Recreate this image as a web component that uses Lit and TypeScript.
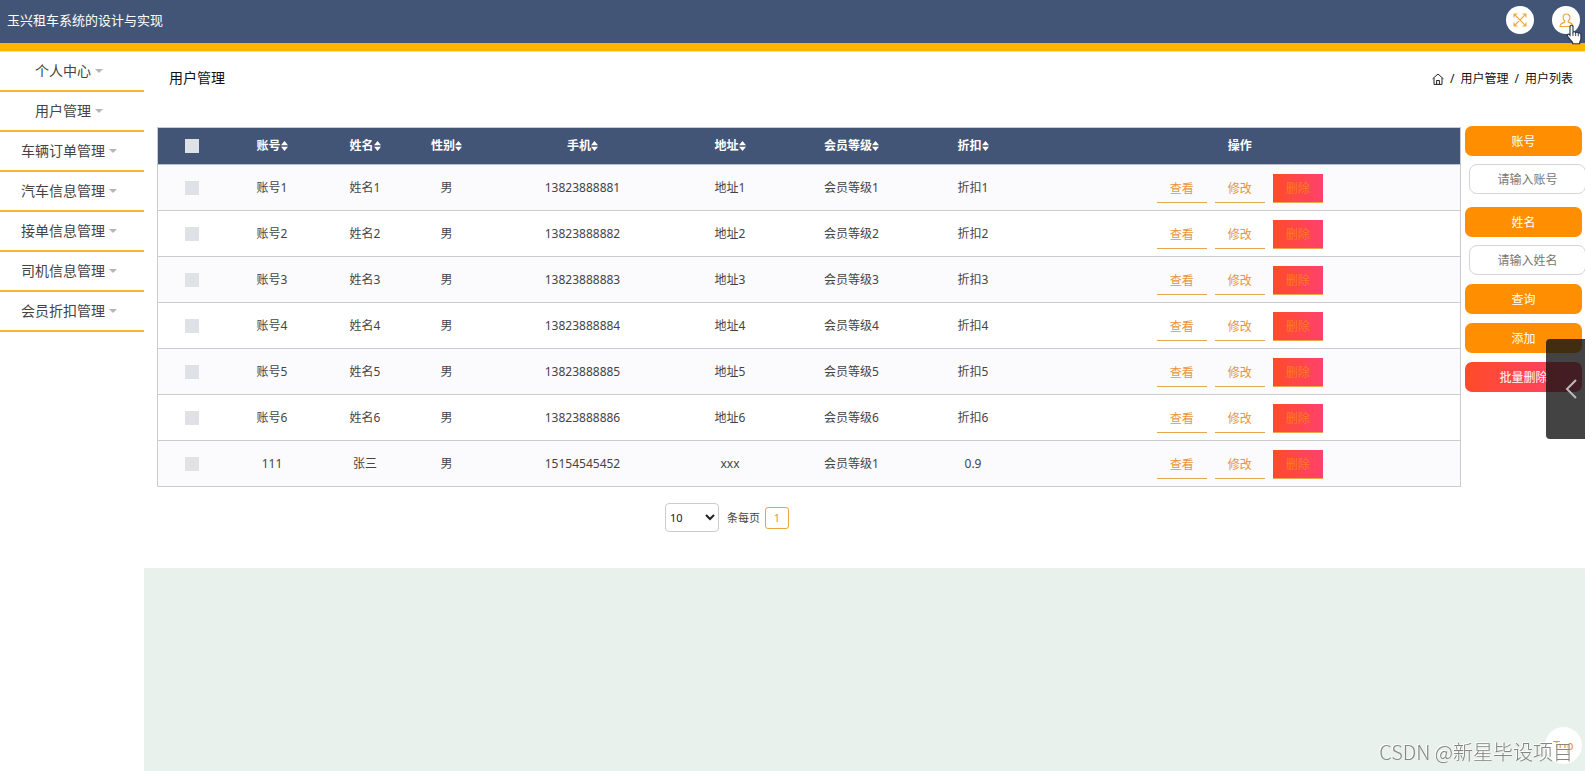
import { LitElement, html, css, svg } from "lit";
import { customElement, state } from "lit/decorators.js";

interface Member {
  account: string;
  name: string;
  sex: string;
  phone: string;
  address: string;
  level: string;
  discount: string;
}

const MENU = ["个人中心", "用户管理", "车辆订单管理", "汽车信息管理", "接单信息管理", "司机信息管理", "会员折扣管理"];

const COLUMNS = ["账号", "姓名", "性别", "手机", "地址", "会员等级", "折扣"];

const MEMBERS: Member[] = [
  ...[1, 2, 3, 4, 5, 6].map((n) => ({
    account: `账号${n}`,
    name: `姓名${n}`,
    sex: "男",
    phone: `1382388888${n}`,
    address: `地址${n}`,
    level: `会员等级${n}`,
    discount: `折扣${n}`,
  })),
  { account: "111", name: "张三", sex: "男", phone: "15154545452", address: "xxx", level: "会员等级1", discount: "0.9" },
];

const sortIcon = svg`<svg class="sort" viewBox="0 0 7 10" aria-hidden="true"><path d="M3.5 0 7 4.3H0zM3.5 10 0 5.7h7z" fill="currentColor"/></svg>`;

const expandIcon = svg`<svg viewBox="0 0 14 14" width="14" height="14" fill="none" stroke="#f0a63c" stroke-width="1.1" aria-hidden="true">
  <path d="M1 1l12 12M13 1L1 13M1 4.5V1h3.5M9.500 1H13v3.500M13 9.500V13H9.500M4.500 13H1V9.500"/></svg>`;

const userIcon = svg`<svg viewBox="0 0 15 15" width="15" height="15" fill="none" stroke="#f0a63c" stroke-width="1.2" stroke-linejoin="round" aria-hidden="true">
  <path d="M7.500 1C5.400 1 4.100 2.500 4.100 4.600c0 1.600.7 2.800 1.700 3.500v1.100C3.600 9.800 1.300 10.900 1 13.500h13c-.3-2.600-2.600-3.700-4.800-4.300V8.100c1-.7 1.700-1.900 1.700-3.500C10.900 2.500 9.600 1 7.500 1z"/></svg>`;

const homeIcon = svg`<svg viewBox="0 0 12 12" width="12" height="12" fill="none" stroke="#222" stroke-width="1" aria-hidden="true">
  <path d="M.6 5.800 6 1l5.400 4.800M2 5v6.400h8V5M4.600 11.400V7.500h2.800v3.900"/></svg>`;

const handIcon = svg`<svg class="hand" viewBox="0 0 17 21" width="17" height="21" aria-hidden="true">
  <path d="M5.400 1.200c1 0 1.600.6 1.600 1.600v5.300c.3-.5 2.300-.5 2.600.5.500-.6 2.300-.4 2.600.6.600-.5 2.500-.1 2.700 1.200v4.400c0 1.200-1 2.500-1.200 3.600v1.400H6.600v-1.300C5 16.800 3.200 14.500 1.700 12.300c-.9-1.500.6-2.700 1.800-1.600l.5.600V2.800c0-1 .5-1.600 1.400-1.600z" fill="#fff" stroke="#24304a" stroke-width="1.100"/>
  <path d="M7 8.500v3.500M9.700 9v3M12.300 9.800v2.500" stroke="#24304a" stroke-width=".9"/></svg>`;

@customElement("app-root")
export class AppRoot extends LitElement {
  @state() private selected = new Set<number>();

  static styles = css`
    :host {
      display: flex;
      flex-direction: column;
      min-height: 100vh;
      overflow: hidden;
      background: #fff;
      color: #444;
      font: 12px/18px "Noto Sans", "Noto Sans CJK SC", sans-serif;
    }
    * { box-sizing: border-box; }
    button, input, select { font: inherit; color: inherit; margin: 0; }
    button { cursor: pointer; padding: 0; }
    a { color: inherit; text-decoration: none; }

    .top {
      display: flex;
      align-items: center;
      justify-content: space-between;
      height: 51px;
      padding: 0 5px 3px 7px;
      background: #425577;
      border-bottom: 8px solid #ffb400;
      color: #fff;
    }
    .brand { margin: 0; font-size: 13px; font-weight: 400; }
    .tools { display: flex; gap: 18px; }
    .tool {
      position: relative;
      display: grid;
      place-items: center;
      width: 28px;
      height: 28px;
      border: 0;
      border-radius: 50%;
      background: #fff;
    }
    .hand { position: absolute; left: 14px; top: 18px; z-index: 2; }

    .body { display: flex; flex: 1; border-top: 1px solid #ffe08f; }
    .side { flex: none; width: 144px; }
    .menu { margin: 0; padding: 0; list-style: none; }
    .item {
      display: flex;
      align-items: center;
      justify-content: center;
      gap: 4px;
      height: 40px;
      padding-right: 6px;
      border-bottom: 2px solid #efb73a;
      font-size: 14px;
    }
    .item::after {
      content: "";
      border: 4px solid transparent;
      border-top-color: #b5b5b5;
      border-bottom: 0;
    }

    .main { flex: 1; min-width: 0; background: #e8f1eb; }
    .panel { background: #fff; padding: 12px 0 36px 13px; }
    .crumbs {
      display: flex;
      align-items: center;
      justify-content: space-between;
      height: 28px;
      padding: 0 12px;
      color: #111;
    }
    .title { margin: 0; font-size: 14px; font-weight: 400; }
    .path { display: flex; align-items: center; gap: 6px; padding-top: 2px; }
    .home { display: grid; }

    .work { display: flex; align-items: flex-start; gap: 5px; padding-top: 34px; }
    .list { flex: 1; min-width: 0; padding-top: 1px; }
    .grid {
      width: 100%;
      table-layout: fixed;
      border-collapse: collapse;
      border: 1px solid #ccc;
      text-align: center;
    }
    .w-check { width: 68px; }
    .w-sex { width: 70px; }
    .w-short { width: 93px; }
    .w-phone { width: 202px; }
    .w-level { width: 150px; }
    .w-ops { width: 441px; }
    th, td { padding: 0; }
    th { height: 37px; background: #425577; color: #fff; border-bottom: 1px solid #b8bfcc; }
    td { height: 46px; border-bottom: 1px solid #ccc; }
    tbody tr:nth-child(odd) { background: #fbfafd; }
    .sort { width: 7px; height: 10px; vertical-align: -1px; }
    .tick {
      appearance: none;
      display: block;
      width: 14px;
      height: 14px;
      margin: 0 auto;
      background: #dee1e6;
    }
    .tick:checked { background: #ff8f00; }
    .ops { display: flex; justify-content: center; gap: 8px; padding-top: 2px; }
    .op {
      width: 50px;
      height: 29px;
      padding-top: 1px;
      border: 0;
      border-bottom: 1px solid #e5a750;
      background: none;
      color: #e8953a;
    }
    .op.del { background: linear-gradient(90deg, #ff4b2b, #ff416c) border-box; color: #ff7a1c; }

    .pager {
      display: flex;
      align-items: center;
      justify-content: center;
      gap: 8px;
      padding: 16px 163px 0 0;
      font-size: 11px;
    }
    .size {
      width: 54px;
      height: 29px;
      border: 1px solid #ccc;
      border-radius: 4px;
      background: #fff;
      color: #222;
    }
    .pages { display: flex; gap: 5px; align-items: center; }
    .page {
      width: 24px;
      height: 22px;
      border: 1px solid #e8a63c;
      border-radius: 3px;
      background: #fff;
      color: #e8953a;
    }

    .filter { flex: none; width: 117px; margin-right: 3px; display: flex; flex-direction: column; gap: 9px; }
    .tag {
      display: grid;
      place-items: center;
      width: 100%;
      height: 30px;
      padding-top: 1px;
      border: 0;
      border-radius: 7px;
      background: #ff8f00;
      color: #fff;
    }
    .tag.danger { background: linear-gradient(90deg, #ff4b2b, #ff416c); }
    .field { display: flex; flex-direction: column; gap: 8px; }
    .field + .field { padding-top: 4px; }
    .box {
      width: 100%;
      height: 30px;
      margin-left: 4px;
      padding: 1px 8px 0;
      border: 1px solid #d5d5d9;
      border-radius: 8px;
      background: #fff;
      text-align: center;
    }
    .box::placeholder { color: #777; opacity: 1; }

    .drawer {
      position: fixed;
      right: 0;
      top: 339px;
      display: grid;
      place-items: center;
      width: 39px;
      height: 100px;
      padding-left: 10px;
      border: 0;
      border-radius: 4px 0 0 4px;
      background: rgba(20, 20, 20, 0.8);
    }
    .totop {
      position: fixed;
      right: 3px;
      bottom: 7px;
      display: grid;
      place-items: center;
      width: 37px;
      height: 37px;
      border-radius: 50%;
      background: #fff;
      color: #e8953a;
    }
    .mark {
      position: fixed;
      right: 12px;
      bottom: 5px;
      color: #858585;
      font-family: "Noto Sans CJK SC", sans-serif;
      font-size: 20px;
      font-weight: 300;
      line-height: 28px;
      text-shadow: -1px -1px 0 #fff;
      pointer-events: none;
    }
  `;

  private toggle(i: number) {
    const next = new Set(this.selected);
    next.has(i) ? next.delete(i) : next.add(i);
    this.selected = next;
  }

  private toggleAll(e: Event) {
    const on = (e.target as HTMLInputElement).checked;
    this.selected = new Set(on ? MEMBERS.map((_, i) => i) : []);
  }

  private row(m: Member, i: number) {
    return html`<tr>
      <td><input class="tick" type="checkbox" aria-label=${m.account} .checked=${this.selected.has(i)} @change=${() => this.toggle(i)}></td>
      <td>${m.account}</td>
      <td>${m.name}</td>
      <td>${m.sex}</td>
      <td>${m.phone}</td>
      <td>${m.address}</td>
      <td>${m.level}</td>
      <td>${m.discount}</td>
      <td><div class="ops">
        <button class="op">查看</button>
        <button class="op">修改</button>
        <button class="op del">删除</button>
      </div></td>
    </tr>`;
  }

  render() {
    return html`
      <header class="top">
        <h1 class="brand">玉兴租车系统的设计与实现</h1>
        <div class="tools">
          <button class="tool" aria-label="全屏">${expandIcon}</button>
          <button class="tool" aria-label="个人中心">${userIcon}${handIcon}</button>
        </div>
      </header>
      <div class="body">
        <nav class="side">
          <ul class="menu">${MENU.map((m) => html`<li><a class="item" href="#">${m}</a></li>`)}</ul>
        </nav>
        <main class="main">
          <section class="panel">
            <div class="crumbs">
              <h2 class="title">用户管理</h2>
              <nav class="path">
                <a class="home" href="#" aria-label="首页">${homeIcon}</a><span>/</span>
                <a href="#">用户管理</a><span>/</span><span>用户列表</span>
              </nav>
            </div>
            <div class="work">
              <div class="list">
                <table class="grid">
                  <colgroup>
                    <col class="w-check"><col class="w-short"><col class="w-short"><col class="w-sex"><col class="w-phone">
                    <col class="w-short"><col class="w-level"><col class="w-short"><col class="w-ops">
                  </colgroup>
                  <thead>
                    <tr>
                      <th><input class="tick" type="checkbox" aria-label="全选" @change=${this.toggleAll}></th>
                      ${COLUMNS.map((c) => html`<th>${c}${sortIcon}</th>`)}
                      <th>操作</th>
                    </tr>
                  </thead>
                  <tbody>${MEMBERS.map((m, i) => this.row(m, i))}</tbody>
                </table>
                <div class="pager">
                  <select class="size" id="size"><option>10</option><option>25</option><option>50</option></select>
                  <div class="pages"><label for="size">条每页</label><button class="page">1</button></div>
                </div>
              </div>
              <form class="filter" @submit=${(e: Event) => e.preventDefault()}>
                <div class="field">
                  <label class="tag" for="account">账号</label>
                  <input class="box" id="account" type="text" placeholder="请输入账号">
                </div>
                <div class="field">
                  <label class="tag" for="name">姓名</label>
                  <input class="box" id="name" type="text" placeholder="请输入姓名">
                </div>
                <button class="tag" type="submit">查询</button>
                <button class="tag" type="button">添加</button>
                <button class="tag danger" type="button">批量删除</button>
              </form>
            </div>
          </section>
        </main>
      </div>
      <button class="drawer" aria-label="展开">
        <svg viewBox="0 0 12 20" width="12" height="20" fill="none" stroke="#bbb" stroke-width="2" aria-hidden="true"><path d="M11 1 2 10l9 9"/></svg>
      </button>
      <a class="totop" href="#">Top</a>
      <div class="mark">CSDN @新星毕设项目</div>
    `;
  }
}
